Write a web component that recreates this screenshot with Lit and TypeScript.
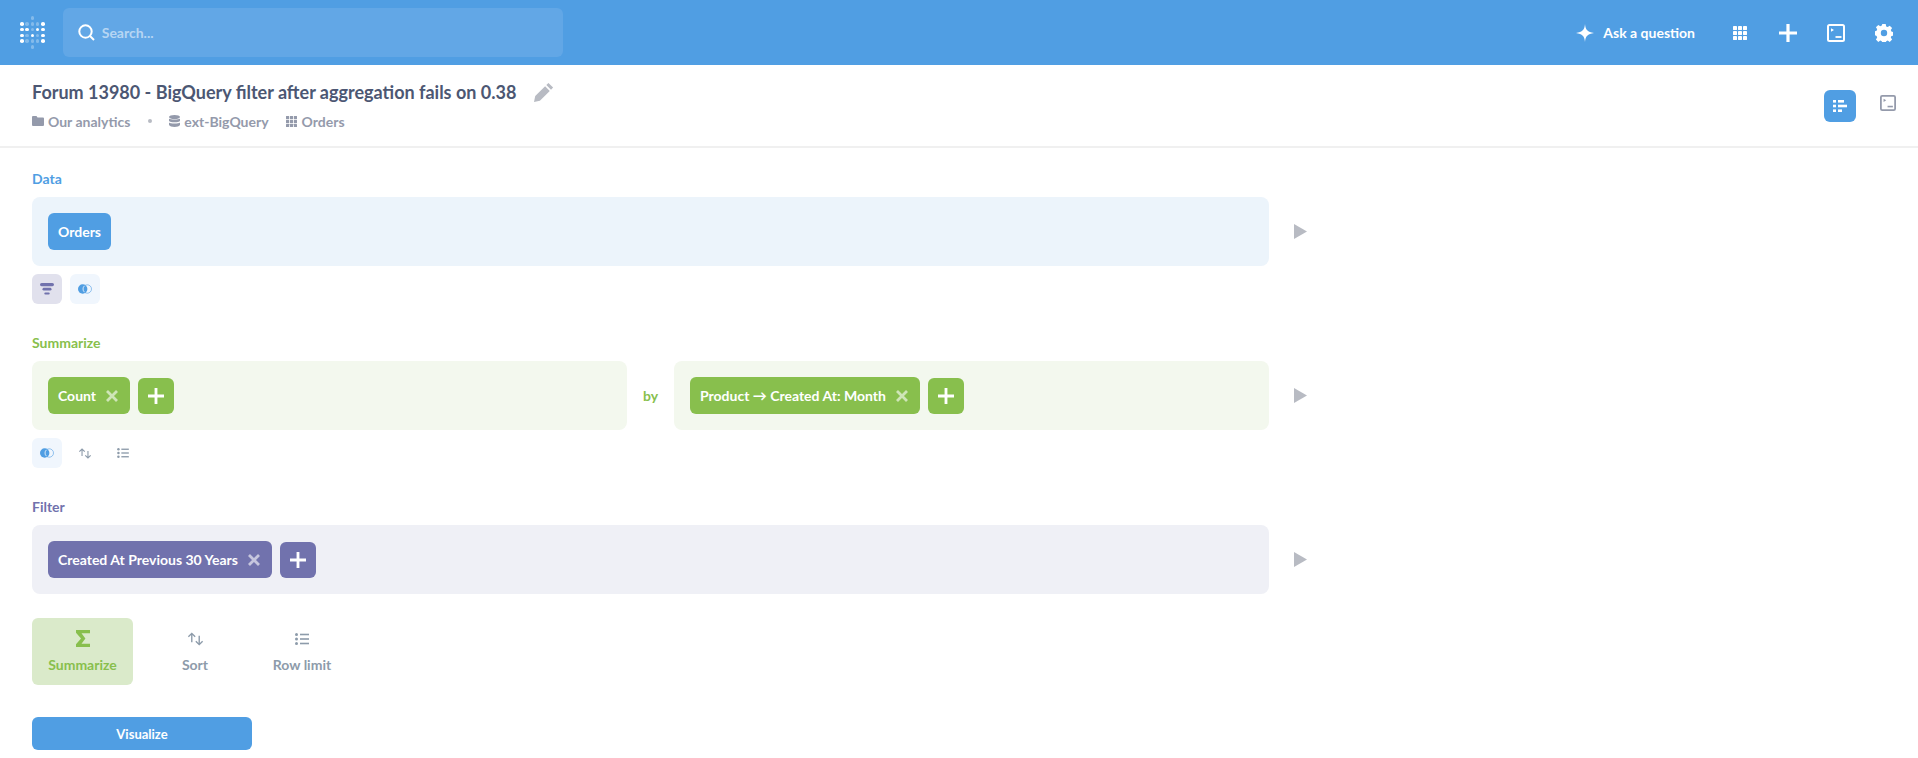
import { LitElement, html, css, svg } from 'lit';
import { customElement } from 'lit/decorators.js';

// dot pattern of the logo: 0 none, 1 faded, 2 white
const LOGO = [
  [0, 0, 1, 0, 0],
  [2, 1, 1, 1, 2],
  [2, 2, 1, 2, 2],
  [2, 1, 2, 1, 2],
  [2, 1, 1, 1, 2],
  [0, 0, 1, 0, 0],
];

const gridIcon = (size: number) => html`<svg width=${size} height=${size} viewBox="0 0 14 14" fill="currentColor">
  ${[0, 5, 10].map((y) => [0, 5, 10].map((x) => svg`<rect x=${x} y=${y} width="4" height="4" rx=".4"></rect>`))}
</svg>`;

const terminalIcon = (size: number) => html`<svg width=${size} height=${size} viewBox="0 0 18 18" fill="none" stroke="currentColor">
  <rect x="1" y="1" width="16" height="16" rx="1.500" stroke-width="2"></rect>
  <path d="M8.500 13h6" stroke-width="1.800"></path>
  <path d="M4 4.200l3 1.800-3 1.800z" fill="currentColor" stroke="none"></path>
</svg>`;

const plusIcon = (size: number) => html`<svg width=${size} height=${size} viewBox="0 0 18 18" fill="currentColor">
  <path d="M7.400 0h3.200v7.400H18v3.200h-7.400V18H7.400v-7.400H0V7.400h7.400z"></path>
</svg>`;

const crossIcon = html`<svg class="x" width="12" height="12" viewBox="0 0 12 12" fill="none" stroke="currentColor" stroke-width="2.800">
  <path d="M1 1l10 10M11 1L1 11"></path>
</svg>`;

const joinIcon = html`<svg width="14" height="10" viewBox="0 0 14 10" fill="none">
  <circle cx="9.300" cy="5" r="4.200" stroke="#509ee3" stroke-width=".9" opacity=".65"></circle>
  <circle cx="4.700" cy="5" r="4.700" fill="#509ee3"></circle>
  <path d="M6.500 1.800a4.200 4.200 0 0 0 0 6.400" stroke="#fff" stroke-width=".9" opacity=".85"></path>
</svg>`;

const sortIcon = (color: string, w: number, h: number) => html`<svg width=${w} height=${h} viewBox="0 0 16 13" fill="none" stroke=${color} stroke-width="1.300">
  <path d="M4.500 9.500V1.200M1.300 4.400l3.200-3.200 3.200 3.200"></path>
  <path d="M11.500 3.500v8.300M8.300 8.600l3.200 3.200 3.200-3.200"></path>
</svg>`;

const listIcon = (color: string, w: number, h: number) => html`<svg width=${w} height=${h} viewBox="0 0 14 12" fill=${color}>
  <circle cx="1.500" cy="1.500" r="1.500"></circle><circle cx="1.500" cy="6" r="1.500"></circle><circle cx="1.500" cy="10.500" r="1.500"></circle>
  <rect x="5" y=".7" width="9" height="1.600"></rect><rect x="5" y="5.200" width="9" height="1.600"></rect><rect x="5" y="9.700" width="9" height="1.600"></rect>
</svg>`;

const playIcon = html`<svg class="play" width="13" height="15" viewBox="0 0 13 15"><path d="M0 0l13 7.500-13 7.500z" fill="#b8bbc3"></path></svg>`;

@customElement('app-root')
export class AppRoot extends LitElement {
  static styles = css`
    :host {
      display: block;
      height: 758px;
      overflow: hidden;
      background: #fff;
      font-family: Lato, sans-serif;
      font-weight: 700;
      color: #4c5773;
    }
    .nav {
      display: flex;
      align-items: center;
      height: 65px;
      background: #509ee3;
      color: #fff;
    }
    .logo {
      display: grid;
      grid-template-columns: repeat(5, 3.600px);
      grid-auto-rows: 3.600px;
      column-gap: 1.700px;
      row-gap: 2.100px;
      margin-left: 20px;
      margin-right: 18px;
    }
    .logo i {
      border-radius: 50%;
    }
    .logo .d1 {
      background: rgba(255, 255, 255, 0.3);
    }
    .logo .d2 {
      background: #fff;
    }
    .search {
      display: flex;
      align-items: center;
      box-sizing: border-box;
      width: 500px;
      height: 49px;
      padding-left: 15px;
      gap: 7px;
      border-radius: 6px;
      background: #62a7e6;
      color: rgba(255, 255, 255, 0.55);
      font-size: 14px;
    }
    .actions {
      display: flex;
      align-items: center;
      margin-left: auto;
      margin-right: 10px;
    }
    .ask {
      display: flex;
      align-items: center;
      gap: 9px;
      font-size: 14px;
      margin-right: 21px;
    }
    .nav-icon {
      display: flex;
      justify-content: center;
      width: 48px;
    }
    .bar {
      display: flex;
      justify-content: space-between;
      box-sizing: border-box;
      height: 83px;
      padding: 13px 22px 0 32px;
      border-bottom: 2px solid #f0f0f0;
    }
    .title-row {
      display: flex;
      align-items: center;
      gap: 18px;
      height: 27px;
      font-size: 18px;
      font-weight: 700;
    }
    .crumbs {
      display: flex;
      align-items: center;
      margin-top: 6px;
      height: 20px;
      font-size: 14px;
      color: #949aab;
    }
    .crumbs span {
      display: flex;
      align-items: center;
      gap: 4px;
    }
    .dot {
      width: 4px;
      height: 4px;
      margin: 0 17px 0 18px;
      border-radius: 50%;
      background: #b8bbc3;
    }
    .crumb-table {
      margin-left: 17px;
    }
    .crumbs .crumb-table {
      gap: 5px;
    }
    .views {
      display: flex;
      gap: 24px;
      margin-top: 12px;
      align-items: flex-start;
    }
    .view-on {
      display: flex;
      align-items: center;
      justify-content: center;
      width: 32px;
      height: 32px;
      border-radius: 6px;
      background: #509ee3;
    }
    .view-off {
      margin-top: 5px;
      color: #949aab;
    }
    .notebook {
      padding: 21px 0 0 32px;
    }
    .step {
      margin-bottom: 29px;
    }
    .label {
      height: 19px;
      line-height: 19px;
      margin-bottom: 9px;
      font-size: 14px;
    }
    .row {
      display: flex;
      align-items: center;
    }
    .play {
      margin-left: 25px;
    }
    .box {
      display: flex;
      align-items: center;
      box-sizing: border-box;
      height: 69px;
      padding: 0 16px;
      gap: 8px;
      border-radius: 8px;
    }
    .wide {
      width: 1237px;
    }
    .half {
      width: 595px;
    }
    .by {
      width: 47px;
      text-align: center;
      font-size: 14px;
      color: #88bf4d;
    }
    .pill {
      display: flex;
      align-items: center;
      box-sizing: border-box;
      height: 37px;
      padding: 0 10px;
      border-radius: 6px;
      color: #fff;
      font-size: 14px;
    }
    .pill .x {
      margin-left: 10px;
      margin-right: 2px;
      color: rgba(255, 255, 255, 0.6);
    }
    .add {
      display: flex;
      align-items: center;
      justify-content: center;
      width: 36px;
      height: 36px;
      margin-top: 1px;
      border-radius: 6px;
      color: #fff;
    }
    .data { color: #509ee3; }
    .data .box { background: #ecf4fb; }
    .data .pill { background: #509ee3; }
    .sum { color: #88bf4d; }
    .sum .box { background: #f3f8ee; }
    .sum .pill, .sum .add { background: #88bf4d; }
    .flt { color: #7172ad; }
    .flt .box { background: #eff0f6; }
    .flt .pill, .flt .add { background: #7172ad; }
    .tools {
      display: flex;
      gap: 8px;
      margin-top: 8px;
      height: 30px;
    }
    .tool {
      display: flex;
      align-items: center;
      justify-content: center;
      width: 30px;
      height: 30px;
      border-radius: 6px;
    }
    .tool.join {
      background: #f0f6fd;
    }
    .tool.filter {
      background: #e1e1ed;
    }
    .step.last {
      margin-bottom: 24px;
    }
    .steps {
      display: flex;
      height: 67px;
      margin-bottom: 32px;
      font-size: 14px;
      color: #8d9baa;
    }
    .choice {
      display: flex;
      flex-direction: column;
      align-items: center;
      justify-content: center;
      gap: 9px;
      box-sizing: border-box;
      height: 67px;
      border-radius: 6px;
    }
    .choice .ic {
      display: flex;
      align-items: center;
      justify-content: center;
      height: 17px;
    }
    .choice.on {
      width: 101px;
      background: #daeaca;
      color: #88bf4d;
    }
    .choice.sort {
      width: 88px;
      margin-left: 18px;
    }
    .choice.limit {
      width: 88px;
      margin-left: 19px;
    }
    .run {
      display: flex;
      align-items: center;
      justify-content: center;
      width: 220px;
      height: 33px;
      border-radius: 6px;
      background: #509ee3;
      color: #fff;
      font-size: 13px;
    }
  `;

  render() {
    return html`
      <div class="nav">
        <div class="logo">
          ${LOGO.flat().map((d) => html`<i class="d${d}"></i>`)}
        </div>
        <div class="search">
          <svg width="17" height="17" viewBox="0 0 17 17" fill="none" stroke="#fff" stroke-width="2">
            <circle cx="7.500" cy="7.500" r="6.200"></circle>
            <path d="M12 12l4 4"></path>
          </svg>
          <span class="ph">Search...</span>
        </div>
        <div class="actions">
          <div class="ask">
            <svg width="18" height="18" viewBox="0 0 18 18" fill="#fff">
              <path d="M9 0c.5 5.800 2.500 8 9 9-6.500 1-8.500 3.200-9 9-.5-5.800-2.500-8-9-9 6.500-1 8.500-3.200 9-9z"></path>
            </svg>
            Ask a question
          </div>
          <div class="nav-icon">${gridIcon(14)}</div>
          <div class="nav-icon">${plusIcon(18)}</div>
          <div class="nav-icon">${terminalIcon(18)}</div>
          <div class="nav-icon">
            <svg width="18" height="18" viewBox="0 0 18 18" fill="#fff">
              <path fill-rule="evenodd" d="M7.300 0h3.400l.5 2.400 1.500.6 2-1.300 2.400 2.400-1.300 2 .6 1.500 2.400.5v3.400l-2.400.5-.6 1.500 1.300 2-2.400 2.400-2-1.300-1.500.6-.5 2.400H7.300l-.5-2.400-1.500-.6-2 1.300-2.400-2.400 1.300-2-.6-1.500L-.8 10.700V7.300l2.400-.5.6-1.500-1.300-2 2.400-2.400 2 1.300 1.500-.6zM9 5.800a3.200 3.200 0 1 0 0 6.400 3.200 3.200 0 0 0 0-6.400z"></path>
            </svg>
          </div>
        </div>
      </div>

      <div class="bar">
        <div>
          <div class="title-row">
            Forum 13980 - BigQuery filter after aggregation fails on 0.38
            <svg width="20" height="20" viewBox="0 0 18 18" fill="#b8bbc3">
              <path d="M13 .8l4.200 4.200-1.900 1.900-4.200-4.200zM10 3.800l4.200 4.200-8.900 8.900L0 18l1.100-5.300z"></path>
            </svg>
          </div>
          <div class="crumbs">
            <span>
              <svg width="12" height="10" viewBox="0 0 12 10" fill="#949aab"><path d="M0 1a1 1 0 0 1 1-1h3.500l1 1.500H11a1 1 0 0 1 1 1V9a1 1 0 0 1-1 1H1a1 1 0 0 1-1-1z"></path></svg>
              Our analytics
            </span>
            <i class="dot"></i>
            <span>
              <svg width="11" height="12" viewBox="0 0 11 12" fill="#949aab">
                <ellipse cx="5.500" cy="2" rx="5.500" ry="2"></ellipse>
                <path d="M0 3.600c1 1.300 10 1.300 11 0V6c-1 1.700-10 1.700-11 0zM0 7.600c1 1.300 10 1.300 11 0V10c-1 2.600-10 2.600-11 0z"></path>
              </svg>
              ext-BigQuery
            </span>
            <span class="crumb-table">${gridIcon(11)} Orders</span>
          </div>
        </div>
        <div class="views">
          <div class="view-on">
            <svg width="14" height="12" viewBox="0 0 14 12" fill="#fff">
              <rect y="0" width="3" height="2.600"></rect><rect x="5" y="0" width="6" height="2.600"></rect>
              <rect y="4.700" width="3" height="2.600"></rect><rect x="5" y="4.700" width="9" height="2.600"></rect>
              <rect y="9.400" width="3" height="2.600"></rect><rect x="5" y="9.400" width="4" height="2.600"></rect>
            </svg>
          </div>
          <div class="view-off">${terminalIcon(16)}</div>
        </div>
      </div>

      <div class="notebook">
        <div class="step data">
          <div class="label">Data</div>
          <div class="row">
            <div class="box wide"><div class="pill">Orders</div></div>
            ${playIcon}
          </div>
          <div class="tools">
            <div class="tool filter">
              <svg width="14" height="12" viewBox="0 0 14 12" fill="#7172ad">
                <rect width="14" height="3.200" rx="1.600"></rect>
                <rect x="2.500" y="4.800" width="9" height="2.800" rx="1.400"></rect>
                <rect x="4.300" y="9.400" width="5.400" height="2" rx="1"></rect>
              </svg>
            </div>
            <div class="tool join">${joinIcon}</div>
          </div>
        </div>

        <div class="step sum">
          <div class="label">Summarize</div>
          <div class="row">
            <div class="box half">
              <div class="pill">Count ${crossIcon}</div>
              <div class="add">${plusIcon(16)}</div>
            </div>
            <div class="by">by</div>
            <div class="box half">
              <div class="pill">Product → Created At: Month ${crossIcon}</div>
              <div class="add">${plusIcon(16)}</div>
            </div>
            ${playIcon}
          </div>
          <div class="tools">
            <div class="tool join">${joinIcon}</div>
            <div class="tool">${sortIcon('#8d9baa', 14, 11)}</div>
            <div class="tool">${listIcon('#8d9baa', 12, 10)}</div>
          </div>
        </div>

        <div class="step flt last">
          <div class="label">Filter</div>
          <div class="row">
            <div class="box wide">
              <div class="pill">Created At Previous 30 Years ${crossIcon}</div>
              <div class="add">${plusIcon(16)}</div>
            </div>
            ${playIcon}
          </div>
        </div>

        <div class="steps">
          <div class="choice on">
            <div class="ic">
              <svg width="14" height="17" viewBox="0 0 14 17" fill="#88bf4d"><path d="M0 0h14v3.300H5.500L9.400 8.500 5.500 13.700H14V17H0v-2.800L5 8.500 0 2.800z"></path></svg>
            </div>
            Summarize
          </div>
          <div class="choice sort"><div class="ic">${sortIcon('#8d9baa', 17, 14)}</div>Sort</div>
          <div class="choice limit"><div class="ic">${listIcon('#8d9baa', 14, 12)}</div>Row limit</div>
        </div>

        <div class="run">Visualize</div>
      </div>
    `;
  }
}
